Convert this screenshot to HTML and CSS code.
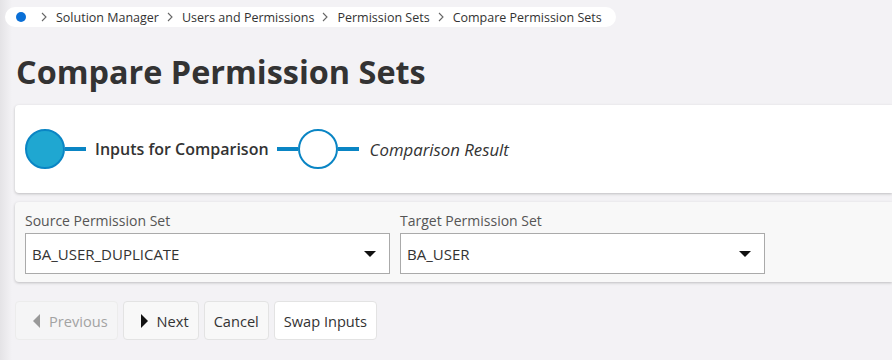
FILE: index.html
```html
<!DOCTYPE html>
<html lang="en">
<head>
    <meta charset="UTF-8">
    <meta name="viewport" content="width=device-width, initial-scale=1.0">
    <title>Compare Permission Sets</title>
    <link rel="stylesheet" href="styles.css">
</head>
<body>
    <!-- Breadcrumb -->
    <nav class="breadcrumb">
        <span class="home-dot"></span>
        <svg class="chevron" viewBox="0 0 6 10"><path d="M1 1l4 4-4 4" fill="none" stroke="#666" stroke-width="1.1"/></svg>
        <span class="crumb">Solution Manager</span>
        <svg class="chevron" viewBox="0 0 6 10"><path d="M1 1l4 4-4 4" fill="none" stroke="#666" stroke-width="1.1"/></svg>
        <span class="crumb">Users and Permissions</span>
        <svg class="chevron" viewBox="0 0 6 10"><path d="M1 1l4 4-4 4" fill="none" stroke="#666" stroke-width="1.1"/></svg>
        <span class="crumb">Permission Sets</span>
        <svg class="chevron" viewBox="0 0 6 10"><path d="M1 1l4 4-4 4" fill="none" stroke="#666" stroke-width="1.1"/></svg>
        <span class="crumb">Compare Permission Sets</span>
    </nav>

    <div class="content">
        <h1 class="page-title">Compare Permission Sets</h1>

        <!-- Stepper -->
        <div class="card stepper">
            <div class="step">
                <span class="step-circle active"></span>
                <span class="step-line"></span>
                <span class="step-label current">Inputs for Comparison</span>
            </div>
            <div class="step">
                <span class="step-line"></span>
                <span class="step-circle"></span>
                <span class="step-line"></span>
                <span class="step-label pending">Comparison Result</span>
            </div>
        </div>

        <!-- Inputs -->
        <div class="card form-card">
            <div class="field">
                <label class="field-label">Source Permission Set</label>
                <div class="select">
                    <span>BA_USER_DUPLICATE</span>
                    <span class="caret-down"></span>
                </div>
            </div>
            <div class="field">
                <label class="field-label">Target Permission Set</label>
                <div class="select">
                    <span>BA_USER</span>
                    <span class="caret-down"></span>
                </div>
            </div>
        </div>

        <!-- Actions -->
        <div class="actions">
            <button class="btn btn-icon" disabled><span class="caret-left"></span>Previous</button>
            <button class="btn btn-icon"><span class="caret-right"></span>Next</button>
            <button class="btn">Cancel</button>
            <button class="btn btn-white">Swap Inputs</button>
        </div>
    </div>
</body>
</html>
```

FILE: styles.css
```css
body {
    margin: 0;
    padding: 0;
    height: 360px;
    overflow: hidden;
    font-family: "Open Sans", Arial, sans-serif;
    color: #333;
    background: linear-gradient(to right, #e4e3e6 0, #f3f2f5 12px) #f3f2f5;
}
.breadcrumb {
    display: inline-flex;
    align-items: center;
    margin: 7px 0 0 5px;
    height: 20px;
    padding: 0 14px 0 11px;
    background: #fff;
    border-radius: 10px;
    font-size: 12.5px;
}
.home-dot {
    width: 10px;
    height: 10px;
    border-radius: 50%;
    background: #0a6fd6;
}
.chevron {
    width: 6px;
    height: 10px;
    margin: 0 9px 0 15px;
}
.crumb + .chevron {
    margin-left: 8px;
}
.content {
    padding: 0 0 0 15px;
}
.page-title {
    margin: 23px 0 13px 1px;
    font-size: 32.4px;
    font-weight: 700;
    line-height: 42px;
    color: #333;
}
.card {
    border-radius: 4px 0 0 4px;
    box-shadow: 0 1px 3px rgba(0, 0, 0, 0.22);
}
.stepper {
    display: flex;
    align-items: center;
    height: 88px;
    padding-left: 10px;
    background: #fff;
}
.step {
    display: flex;
    align-items: center;
}
.step-circle {
    box-sizing: border-box;
    width: 40px;
    height: 40px;
    border-radius: 50%;
    border: 2px solid #0a85c4;
    background: #fff;
}
.step-circle.active {
    background: #1fa7d1;
}
.step-line {
    width: 21px;
    height: 4px;
    background: #0a85c4;
}
.step-label {
    font-size: 16px;
    margin: 0 8px 0 9px;
}
.step-label.current {
    font-weight: 600;
}
.step-label.pending {
    font-style: italic;
    font-size: 16.8px;
    margin-left: 11px;
}
.form-card {
    display: flex;
    gap: 10px;
    margin-top: 9px;
    padding: 9px 10px 8px;
    background: #f8f8f8;
}
.field {
    display: flex;
    flex-direction: column;
}
.field-label {
    font-size: 14px;
    line-height: 20px;
    color: #555;
    margin-bottom: 2px;
}
.select {
    box-sizing: border-box;
    width: 365px;
    height: 41px;
    display: flex;
    align-items: center;
    justify-content: space-between;
    padding: 0 13px 0 6px;
    border: 1px solid #aaa;
    background: #fff;
    font-size: 15px;
}
.caret-down {
    width: 0;
    height: 0;
    border-left: 6px solid transparent;
    border-right: 6px solid transparent;
    border-top: 6px solid #111;
}
.actions {
    display: flex;
    gap: 5px;
    margin-top: 19px;
}
.btn {
    box-sizing: border-box;
    height: 39px;
    display: flex;
    align-items: center;
    padding: 0 9px;
    font-family: "Open Sans", Arial, sans-serif;
    font-size: 14.6px;
    color: #333;
    background: #f8f8f8;
    border: 1px solid #e3e3e3;
    border-radius: 4px;
}
.btn-white {
    background: #fff;
}
.btn-icon {
    padding-left: 17px;
}
.btn[disabled] {
    color: #a3a3a3;
    background: #f5f5f6;
    border-color: #ececec;
}
.caret-left,
.caret-right {
    width: 0;
    height: 0;
    border-top: 7px solid transparent;
    border-bottom: 7px solid transparent;
    margin-right: 9px;
}
.caret-left {
    border-right: 7px solid #999;
}
.caret-right {
    border-left: 7px solid #111;
    margin-right: 9px;
}
```
